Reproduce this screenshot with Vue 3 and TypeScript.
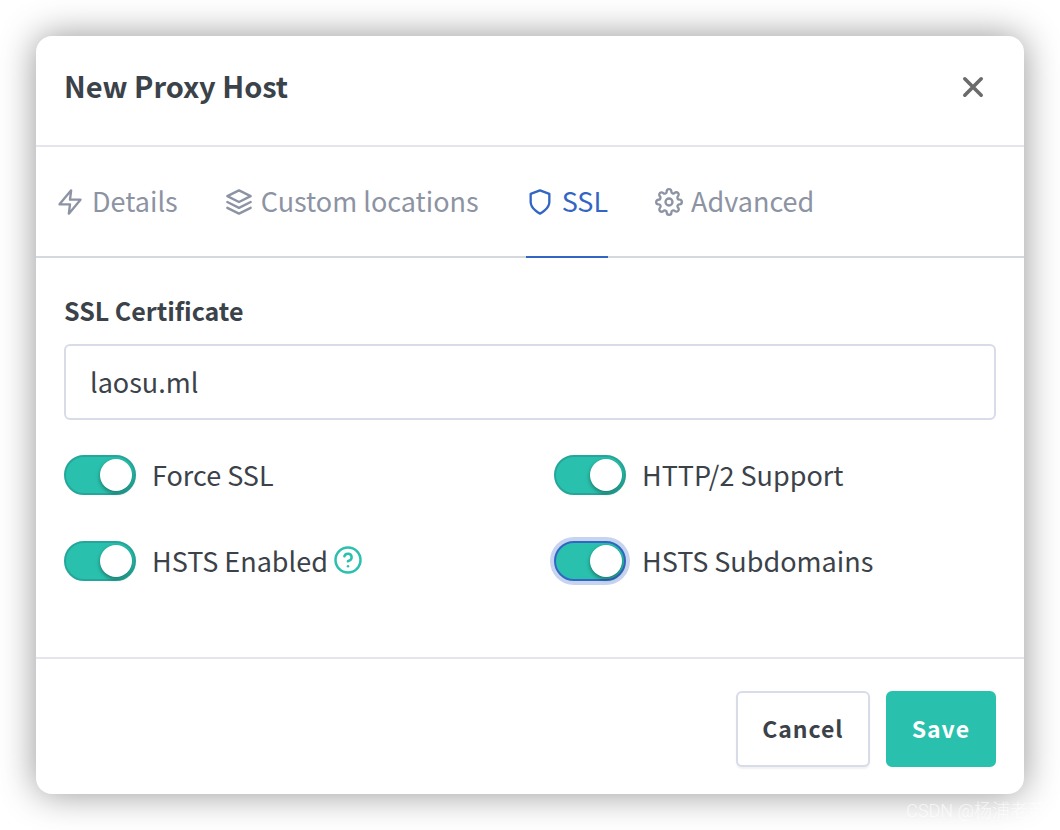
<script setup lang="ts">
import { ref } from 'vue'

type TabId = 'details' | 'locations' | 'ssl' | 'advanced'

interface Tab {
  id: TabId
  label: string
  paths: string[]
}

interface Toggle {
  id: string
  label: string
  on: boolean
  help?: boolean
}

const tabs: Tab[] = [
  { id: 'details', label: 'Details', paths: ['M13 2 3 14h9l-1 8 10-12h-9l1-8z'] },
  {
    id: 'locations',
    label: 'Custom locations',
    paths: ['M12 2 2 7l10 5 10-5-10-5z', 'M2 17l10 5 10-5', 'M2 12l10 5 10-5'],
  },
  { id: 'ssl', label: 'SSL', paths: ['M12 22s8-4 8-10V5l-8-3-8 3v7c0 6 8 10 8 10z'] },
  {
    id: 'advanced',
    label: 'Advanced',
    paths: [
      'M15 12a3 3 0 1 1-6 0 3 3 0 0 1 6 0z',
      'M19.4 15a1.65 1.65 0 0 0 .33 1.82l.06.06a2 2 0 0 1 0 2.83 2 2 0 0 1-2.83 0l-.06-.06a1.65 1.65 0 0 0-1.82-.33 1.65 1.65 0 0 0-1 1.51V21a2 2 0 0 1-2 2 2 2 0 0 1-2-2v-.09A1.65 1.65 0 0 0 9 19.4a1.65 1.65 0 0 0-1.82.33l-.06.06a2 2 0 0 1-2.83 0 2 2 0 0 1 0-2.83l.06-.06a1.65 1.65 0 0 0 .33-1.82 1.65 1.65 0 0 0-1.51-1H3a2 2 0 0 1-2-2 2 2 0 0 1 2-2h.09A1.65 1.65 0 0 0 4.6 9a1.65 1.65 0 0 0-.33-1.82l-.06-.06a2 2 0 0 1 0-2.83 2 2 0 0 1 2.83 0l.06.06a1.65 1.65 0 0 0 1.82.33H9a1.65 1.65 0 0 0 1-1.51V3a2 2 0 0 1 2-2 2 2 0 0 1 2 2v.09a1.65 1.65 0 0 0 1 1.51 1.65 1.65 0 0 0 1.82-.33l.06-.06a2 2 0 0 1 2.83 0 2 2 0 0 1 0 2.83l-.06.06a1.65 1.65 0 0 0-.33 1.82V9a1.65 1.65 0 0 0 1.51 1H21a2 2 0 0 1 2 2 2 2 0 0 1-2 2h-.09a1.65 1.65 0 0 0-1.51 1z',
    ],
  },
]

const activeTab = ref<TabId>('ssl')
const certificate = ref('laosu.ml')
const focusedToggle = ref('hsts-subdomains')
const toggles = ref<Toggle[]>([
  { id: 'force-ssl', label: 'Force SSL', on: true },
  { id: 'http2', label: 'HTTP/2 Support', on: true },
  { id: 'hsts', label: 'HSTS Enabled', on: true, help: true },
  { id: 'hsts-subdomains', label: 'HSTS Subdomains', on: true },
])
</script>

<template>
  <div class="page">
    <form class="modal" role="dialog" aria-labelledby="modal-title" @submit.prevent>
      <header class="modal-header">
        <h1 id="modal-title" class="title">New Proxy Host</h1>
        <button type="button" class="close" aria-label="Close">
          <svg viewBox="0 0 24 24" aria-hidden="true"><path d="M3.8 3.8l16.4 16.4M20.2 3.8L3.8 20.2" /></svg>
        </button>
      </header>

      <nav class="tabs">
        <a
          v-for="tab in tabs"
          :key="tab.id"
          href="#"
          class="tab"
          :class="{ active: tab.id === activeTab }"
          @click.prevent="activeTab = tab.id"
        >
          <svg class="icon" viewBox="0 0 24 24" aria-hidden="true">
            <path v-for="d in tab.paths" :key="d" :d="d" />
          </svg>
          <span>{{ tab.label }}</span>
        </a>
      </nav>

      <section class="modal-body">
        <label class="field-label" for="certificate">SSL Certificate</label>
        <select id="certificate" v-model="certificate" class="field">
          <option value="laosu.ml">laosu.ml</option>
        </select>

        <div class="toggles">
          <div v-for="toggle in toggles" :key="toggle.id" class="toggle-row">
            <label class="toggle" :for="toggle.id">
              <input
                :id="toggle.id"
                v-model="toggle.on"
                type="checkbox"
                role="switch"
                class="switch"
                :class="{ focused: focusedToggle === toggle.id }"
                @focus="focusedToggle = toggle.id"
                @blur="focusedToggle = ''"
              />
              <span>{{ toggle.label }}</span>
            </label>
            <a v-if="toggle.help" href="#" class="help" aria-label="About HSTS" @click.prevent>
              <svg viewBox="0 0 24 24" aria-hidden="true">
                <circle cx="12" cy="12" r="10" />
                <path d="M9.09 9a3 3 0 0 1 5.83 1c0 2-3 3-3 3" />
                <path d="M12 17h.01" />
              </svg>
            </a>
          </div>
        </div>
      </section>

      <footer class="modal-footer">
        <button type="button" class="btn btn-secondary">Cancel</button>
        <button type="submit" class="btn btn-primary">Save</button>
      </footer>
    </form>
    <span class="watermark">CSDN @杨浦老苏</span>
  </div>
</template>

<style>
body {
  margin: 0;
  background: #fff;
}
</style>

<style scoped>
.page {
  position: relative;
  box-sizing: border-box;
  min-height: 100vh;
  padding: 36px;
  overflow: hidden;
  font-family: "Noto Sans CJK SC", "Noto Sans", sans-serif;
  font-size: 27px;
  line-height: 40px;
  color: #3b4249;
}

.modal {
  background: #fff;
  border-radius: 16px;
  box-shadow: 0 0 36px rgba(0, 0, 0, 0.42);
}

.modal-header {
  display: flex;
  align-items: flex-start;
  justify-content: space-between;
  padding: 29px 39px 40px 28px;
  border-bottom: 2px solid #e5e5eb;
}

.title {
  margin: 0;
  font-size: 29px;
  font-weight: 700;
  line-height: 40px;
}

.close {
  display: flex;
  padding: 10px 0 0;
  border: 0;
  background: none;
  color: #6b6b6b;
  cursor: pointer;
}

.close svg {
  width: 24px;
  height: 24px;
  fill: none;
  stroke: currentColor;
  stroke-width: 3.6;
  stroke-linecap: round;
}

.tabs {
  display: flex;
  gap: 47px;
  padding: 0 20px;
  border-bottom: 2px solid #d5d9de;
}

.tab {
  display: flex;
  align-items: center;
  gap: 8px;
  margin-bottom: -2px;
  padding: 34px 0 35px;
  border-bottom: 2px solid transparent;
  color: #8c93a3;
  text-decoration: none;
  white-space: nowrap;
}

.tab.active {
  color: #3366c4;
  border-bottom-color: #3366c4;
}

.icon {
  width: 28px;
  height: 28px;
  margin-top: 2px;
  fill: none;
  stroke: currentColor;
  stroke-width: 2;
  stroke-linecap: round;
  stroke-linejoin: round;
}

.modal-body {
  padding: 34px 28px 76px;
}

.field-label {
  display: block;
  margin-bottom: 16px;
  font-size: 25px;
  font-weight: 700;
  line-height: 36px;
}

.field {
  display: block;
  box-sizing: border-box;
  width: 100%;
  height: 76px;
  padding: 0 24px;
  border: 2px solid #d8dce9;
  border-radius: 6px;
  appearance: none;
  background: #fff;
  color: inherit;
  font: inherit;
}

.toggles {
  display: grid;
  grid-template-columns: 1fr 1fr;
  gap: 46px 48px;
  margin-top: 35px;
}

.toggle-row {
  display: flex;
  align-items: center;
  gap: 5px;
}

.toggle {
  display: flex;
  align-items: center;
  gap: 16px;
  cursor: pointer;
}

.switch {
  display: flex;
  flex: none;
  box-sizing: border-box;
  width: 72px;
  height: 40px;
  margin: 0;
  padding: 2px;
  border: 2px solid #26a69a;
  border-radius: 20px;
  appearance: none;
  outline: none;
  background: #c5ccd6;
  cursor: pointer;
}

.switch::before {
  content: "";
  width: 32px;
  height: 32px;
  border-radius: 50%;
  background: #fff;
  box-shadow: 0 2px 4px rgba(0, 0, 0, 0.4);
}

.switch:checked {
  justify-content: flex-end;
  background: #29c1ad;
}

.switch.focused {
  border-color: #3366c4;
  box-shadow: 0 0 0 4px #c6d4ef;
}

.help {
  display: flex;
  color: #29c1ad;
}

.help svg {
  width: 30px;
  height: 30px;
  margin-bottom: 2px;
  fill: none;
  stroke: currentColor;
  stroke-width: 2;
  stroke-linecap: round;
  stroke-linejoin: round;
}

.modal-footer {
  display: flex;
  justify-content: flex-end;
  gap: 16px;
  padding: 32px 28px 27px;
  border-top: 2px solid #e5e5eb;
}

.btn {
  padding: 17px 24px 19px;
  border: 2px solid transparent;
  border-radius: 6px;
  font-family: inherit;
  font-size: 23px;
  font-weight: 700;
  line-height: 36px;
  letter-spacing: 1px;
  cursor: pointer;
}

.btn-secondary {
  border-color: #d8dce9;
  background: #fff;
  color: #3b4249;
  box-shadow: 0 2px 2px rgba(0, 0, 0, 0.06);
}

.btn-primary {
  border-color: #29c1ad;
  background: #29c1ad;
  color: #fff;
}

.watermark {
  position: absolute;
  right: 14px;
  bottom: 7px;
  font-family: Roboto, "Noto Sans CJK SC", sans-serif;
  font-size: 18px;
  font-weight: 300;
  line-height: 24px;
  color: rgba(255, 255, 255, 0.7);
}
</style>
